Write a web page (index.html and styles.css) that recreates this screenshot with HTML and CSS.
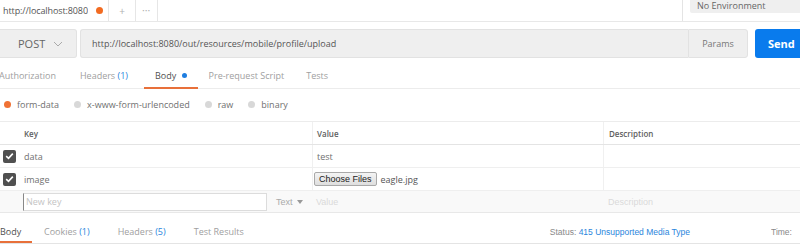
FILE: index.html
```html
<!DOCTYPE html>
<html lang="en">
<head>
  <meta charset="UTF-8" />
  <title>Postman - upload</title>
  <link rel="stylesheet" href="styles.css">
</head>
<body>
  <div class="topbar">
    <div class="tab">
      <span class="tab-title">http://localhost:8080/out</span>
      <span class="dot orange"></span>
    </div>
    <div class="tab-btn">+</div>
    <div class="tab-btn more">&bull;&bull;&bull;</div>
    <div class="spacer"></div>
    <div class="env-wrap"><div class="env">No Environment</div></div>
  </div>

  <div class="request">
    <div class="method">POST <svg width="10" height="6" viewBox="0 0 10 6"><path d="M1 1l4 4 4-4" fill="none" stroke="#aaa" stroke-width="1"/></svg></div>
    <div class="url">http://localhost:8080/out/resources/mobile/profile/upload</div>
    <div class="params">Params</div>
    <div class="send">Send</div>
  </div>

  <div class="tabs">
    <span class="tabitem first">Authorization</span>
    <span class="tabitem">Headers <b class="count">(1)</b></span>
    <span class="tabitem current">Body <span class="dot blue"></span></span>
    <span class="tabitem">Pre-request Script</span>
    <span class="tabitem">Tests</span>
  </div>

  <div class="bodytypes">
    <label class="radio"><span class="circle on"></span>form-data</label>
    <label class="radio"><span class="circle"></span>x-www-form-urlencoded</label>
    <label class="radio"><span class="circle"></span>raw</label>
    <label class="radio"><span class="circle"></span>binary</label>
  </div>

  <div class="kv">
    <div class="row head">
      <div class="chk"></div>
      <div class="cell key">Key</div>
      <div class="cell val">Value</div>
      <div class="cell desc">Description</div>
    </div>
    <div class="row">
      <div class="chk"><span class="box"><svg width="9" height="8" viewBox="0 0 9 8"><path d="M1.2 4.2l2.3 2.2L7.8 1.6" fill="none" stroke="#fff" stroke-width="1.6"/></svg></span></div>
      <div class="cell key">data</div>
      <div class="cell val">test</div>
      <div class="cell desc"></div>
    </div>
    <div class="row">
      <div class="chk"><span class="box"><svg width="9" height="8" viewBox="0 0 9 8"><path d="M1.2 4.2l2.3 2.2L7.8 1.6" fill="none" stroke="#fff" stroke-width="1.6"/></svg></span></div>
      <div class="cell key">image</div>
      <div class="cell val"><span class="filebtn">Choose Files</span><span class="filename">eagle.jpg</span></div>
      <div class="cell desc"></div>
    </div>
    <div class="row newrow">
      <div class="chk"></div>
      <div class="cell key newkey">
        <span class="input">New key</span>
        <span class="type">Text <svg width="6" height="4" viewBox="0 0 6 4"><path d="M0 0h6L3 4z" fill="#999"/></svg></span>
      </div>
      <div class="cell val ph">Value</div>
      <div class="cell desc ph">Description</div>
    </div>
  </div>

  <div class="response">
    <span class="rtab current">Body</span>
    <span class="rtab">Cookies <b class="count">(1)</b></span>
    <span class="rtab">Headers <b class="count">(5)</b></span>
    <span class="rtab">Test Results</span>
    <div class="spacer"></div>
    <span class="status">Status: <b class="count">415 Unsupported Media Type</b></span>
    <span class="status time">Time:</span>
  </div>
</body>
</html>
```

FILE: styles.css
```css
* {
  margin: 0;
  padding: 0;
  box-sizing: border-box;
}
body {
  width: 800px;
  height: 246px;
  overflow: hidden;
  background: #fff;
  color: #808080;
  font-family: 'Open Sans', sans-serif;
  font-size: 9px;
}
.topbar {
  display: flex;
  height: 22px;
  border-bottom: 1px solid #e8e8e8;
}
.tab {
  display: flex;
  align-items: center;
  width: 109px;
  padding-left: 3px;
  border-right: 1px solid #e6e6e6;
  color: #555;
  font-size: 9px;
}
.tab-title {
  width: 85px;
  overflow: hidden;
  white-space: nowrap;
  letter-spacing: -0.1px;
}
.dot {
  display: inline-block;
  border-radius: 50%;
}
.dot.orange {
  width: 7px;
  height: 7px;
  margin-left: 8px;
  background: #f26b21;
}
.dot.blue {
  width: 5px;
  height: 5px;
  margin-left: 3px;
  background: #1e7de0;
}
.tab-btn {
  width: 27px;
  display: flex;
  align-items: center;
  justify-content: center;
  color: #b0b0b0;
  font-size: 10px;
  border-right: 1px solid #e6e6e6;
}
.tab-btn.more {
  width: 22px;
  font-size: 6px;
  letter-spacing: 0.5px;
}
.spacer {
  flex: 1;
}
.env-wrap {
  width: 118px;
  border-left: 1px solid #e4e4e4;
  padding-left: 7px;
}
.env {
  height: 13px;
  padding-left: 7px;
  padding-top: 1px;
  background: #efefef;
  color: #666;
  font-size: 9px;
  line-height: 9px;
  border-radius: 0 0 0 2px;
}
.request {
  display: flex;
  height: 29px;
  margin-top: 7px;
}
.method {
  width: 77px;
  display: flex;
  align-items: center;
  gap: 8px;
  padding-left: 18px;
  background: #efefef;
  border: 1px solid #e2e2e2;
  border-left: none;
  border-radius: 0 3px 3px 0;
  color: #666;
  font-size: 11px;
}
.url {
  flex: 1;
  display: flex;
  align-items: center;
  margin-left: 3px;
  padding-left: 11px;
  background: #efefef;
  border: 1px solid #e2e2e2;
  border-right: none;
  border-radius: 3px 0 0 3px;
  color: #555;
}
.params {
  width: 60px;
  display: flex;
  align-items: center;
  justify-content: center;
  background: #efefef;
  border: 1px solid #e2e2e2;
  border-radius: 0 3px 3px 0;
  color: #777;
}
.send {
  width: 45px;
  margin-left: 7px;
  display: flex;
  align-items: center;
  padding-left: 13px;
  background: #097bed;
  border-radius: 3px 0 0 3px;
  color: #fff;
  font-weight: 700;
  font-size: 11px;
}
.tabs {
  display: flex;
  height: 31px;
  padding-top: 6px;
  border-bottom: 1px solid #ececec;
}
.tabitem {
  display: flex;
  align-items: center;
  padding: 0 11px;
  color: #a0a0a0;
  white-space: pre;
  border-bottom: 2px solid transparent;
  margin-bottom: -1px;
}
.tabitem.first {
  padding-left: 0;
  margin-left: -1px;
  padding-right: 13px;
}
.count {
  font-weight: 400;
  color: #2a85dc;
}
.tabitem.current {
  color: #505050;
  border-bottom-color: #e8703a;
  margin-left: 5px;
}
.bodytypes {
  display: flex;
  align-items: center;
  height: 32px;
  padding-left: 4px;
  padding-bottom: 1px;
}
.radio {
  display: flex;
  align-items: center;
  margin-right: 15px;
  color: #707070;
}
.circle {
  width: 7px;
  height: 7px;
  margin-right: 6px;
  border-radius: 50%;
  background: #d8d8d8;
}
.circle.on {
  background: #f07235;
}
.kv {
  border-top: 1px solid #ececec;
}
.row {
  display: flex;
  height: 23px;
  border-bottom: 1px solid #efefef;
}
.row.head {
  border-bottom: 1px solid #e4e4e4;
  font-size: 8px;
  font-weight: 600;
}
.chk {
  width: 19px;
  display: flex;
  align-items: center;
  padding-left: 3px;
}
.box {
  width: 13px;
  height: 13px;
  display: flex;
  align-items: center;
  justify-content: center;
  background: #505050;
  border-radius: 2px;
}
.cell {
  display: flex;
  align-items: center;
  padding-left: 5px;
  color: #707070;
}
.key {
  width: 293px;
}
.val {
  width: 291px;
  border-left: 1px solid #f0f0f0;
  padding-left: 4px;
}
.desc {
  flex: 1;
  border-left: 1px solid #f0f0f0;
  padding-left: 5px;
}
.head .cell {
  color: #606060;
}
.filebtn {
  margin-left: -3px;
  padding: 0 4px;
  height: 14px;
  line-height: 12px;
  background: linear-gradient(#f4f4f4, #dedede);
  border: 1px solid #a9a9a9;
  border-radius: 2px;
  color: #222;
  font-family: 'Liberation Sans', Arial, sans-serif;
  font-size: 9px;
}
.filename {
  margin-left: 4px;
  color: #555;
}
.newrow {
  height: 22px;
  background: #f9f9f9;
  border-bottom: 1px solid #e8e8e8;
}
.newrow .cell {
  border-left: none;
}
.newkey {
  padding-left: 4px;
  gap: 9px;
}
.input {
  width: 244px;
  height: 18px;
  line-height: 16px;
  padding-left: 2px;
  background: #fff;
  border: 1px solid #dcdcdc;
  border-left: 1px solid #888;
  color: #c4c4c4;
}
.type {
  display: flex;
  align-items: center;
  gap: 4px;
  color: #aaa;
  font-family: 'Liberation Sans', Arial, sans-serif;
}
.ph {
  color: #dadada;
  font-family: 'Liberation Sans', Arial, sans-serif;
}
.response {
  display: flex;
  height: 31px;
  padding-top: 8px;
  border-bottom: 1px solid #e4e4e4;
}
.rtab {
  display: flex;
  align-items: center;
  margin-right: 28px;
  color: #a0a0a0;
  white-space: pre;
  border-bottom: 2px solid transparent;
}
.rtab.current {
  color: #505050;
  border-bottom-color: #e8703a;
  width: 32px;
  margin-right: 12px;
}
.status {
  align-self: center;
  font-family: 'Liberation Sans', Arial, sans-serif;
  font-size: 8.5px;
  color: #888;
  white-space: pre;
}
.status .count {
  color: #2a85dc;
}
.time {
  margin-left: 81px;
  width: 29px;
  overflow: hidden;
}
```
